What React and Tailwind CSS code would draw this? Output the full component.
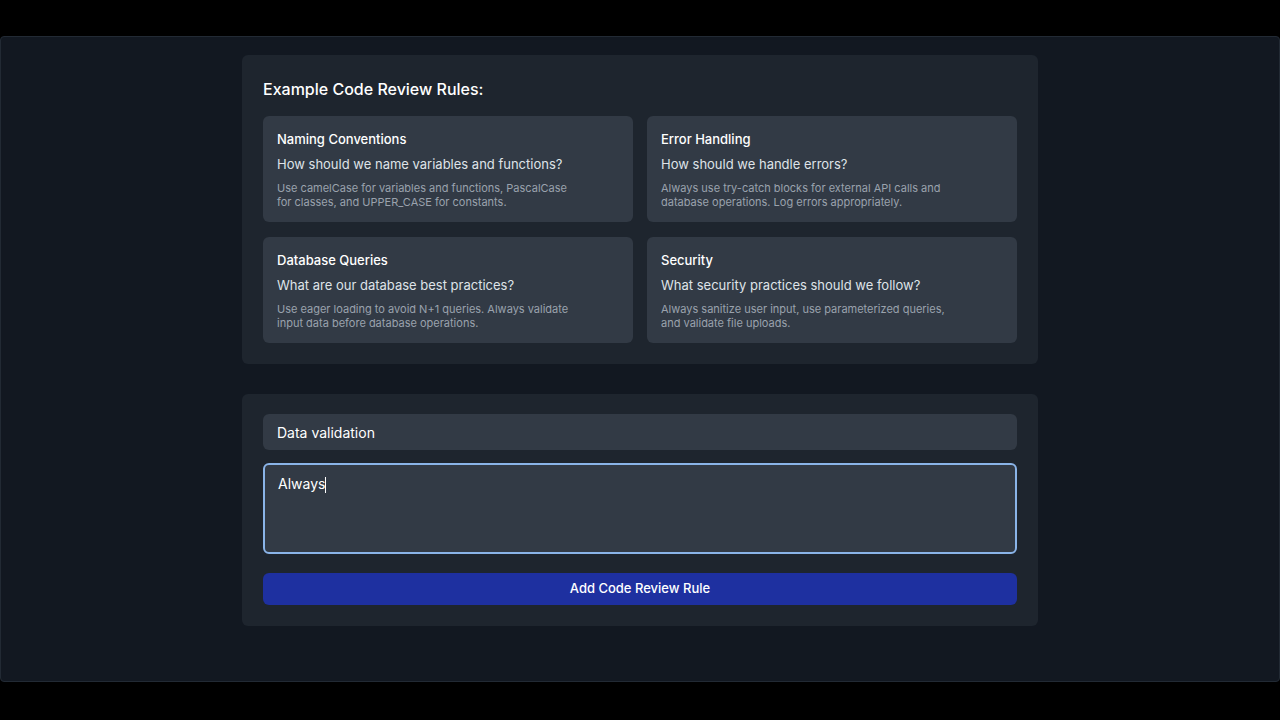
export default function App() {
  const rules = [
    { t: 'Naming Conventions', q: 'How should we name variables and functions?', a: 'Use camelCase for variables and functions, PascalCase for classes, and UPPER_CASE for constants.' },
    { t: 'Error Handling', q: 'How should we handle errors?', a: 'Always use try-catch blocks for external API calls and database operations. Log errors appropriately.' },
    { t: 'Database Queries', q: 'What are our database best practices?', a: 'Use eager loading to avoid N+1 queries. Always validate input data before database operations.' },
    { t: 'Security', q: 'What security practices should we follow?', a: 'Always sanitize user input, use parameterized queries, and validate file uploads.' },
  ];
  return (
    <div className="w-[1280px] h-[720px] bg-black flex flex-col" style={{ fontFamily: 'Inter, "Noto Sans", sans-serif' }}>
      <div className="h-[36px]" />
      <div className="flex-1 bg-[#121821] border border-[#222a34] rounded-sm flex flex-col items-center pt-[18px]">
        <div className="w-[796px] bg-[#1e252e] rounded-md px-[21px] pt-[24px] pb-[21px]">
          <h2 className="text-white text-[16px] font-medium leading-[20px] mb-[17px]">Example Code Review Rules:</h2>
          <div className="grid grid-cols-2 gap-x-[14px] gap-y-[15px]">
            {rules.map((r) => (
              <div key={r.t} className="bg-[#323a45] rounded-md h-[106px] px-[14px] pt-[15px]">
                <div className="text-white text-[13px] font-medium leading-[16px]">{r.t}</div>
                <div className="text-[#dfe3e8] text-[13px] leading-[16px] mt-[9px]">{r.q}</div>
                <div className="text-[#9aa2ad] text-[11px] leading-[14px] mt-[9px] pr-[40px]">{r.a}</div>
              </div>
            ))}
          </div>
        </div>
        <div className="w-[796px] mt-[30px] bg-[#1e252e] rounded-md px-[21px] pt-[20px] pb-[21px]">
          <div className="h-[36px] bg-[#323a45] rounded-md px-[14px] flex items-center text-white text-[14px]">Data validation</div>
          <div className="mt-[13px] h-[91px] bg-[#323a45] rounded-md border-2 border-[#8ab4e8] px-[13px] pt-[8px] text-white text-[14px]">
            Always<span className="inline-block w-px h-[16px] bg-white align-middle" />
          </div>
          <button className="mt-[19px] w-full h-[32px] bg-[#1e30a0] rounded-md text-white text-[13px] font-medium">Add Code Review Rule</button>
        </div>
      </div>
      <div className="h-[38px]" />
    </div>
  );
}
